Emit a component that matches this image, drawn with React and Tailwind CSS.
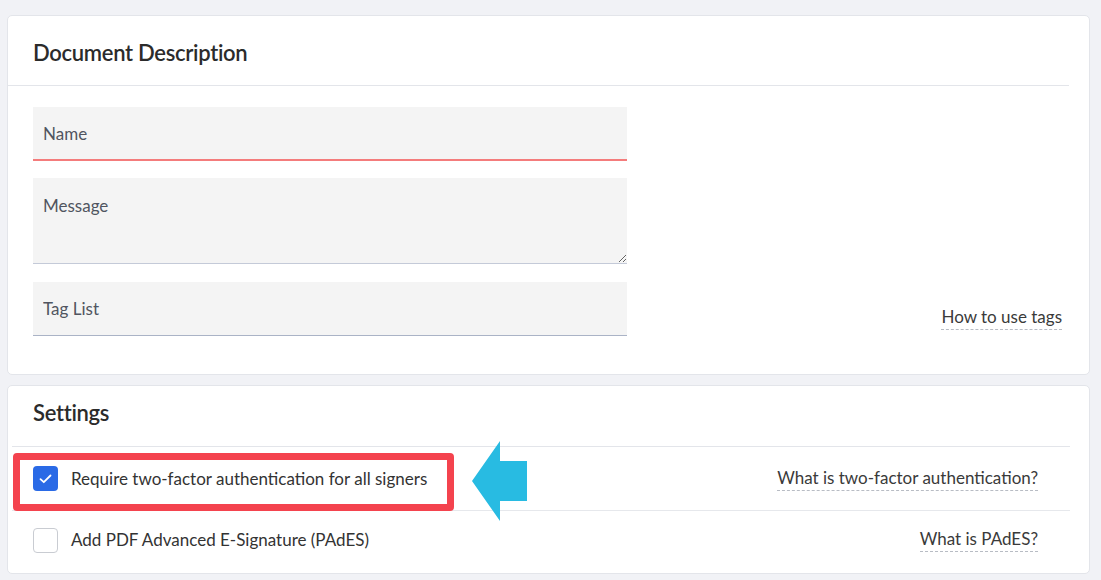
import React from "react";

function HelpLink({ children }) {
  return (
    <span className="text-[17px] leading-[22px] text-[#3a3a3a] border-b border-dashed border-[#b8bcc4] pb-[1px] whitespace-nowrap">
      {children}
    </span>
  );
}

export default function App() {
  return (
    <div
      className="w-[1101px] h-[580px] bg-[#f1f2f6] overflow-hidden"
      style={{ fontFamily: "Lato, 'Noto Sans', sans-serif" }}
    >
      <div className="pt-[15px] pl-[7px] pr-[11px] flex flex-col gap-[10px]">
        {/* Card 1 */}
        <div className="bg-white border border-[#e3e5ea] rounded-[5px] h-[360px] flex flex-col">
          <div className="h-[70px] flex items-center px-[25px] border-b border-[#e3e5ea] mr-[20px]">
            <h2 className="text-[22px] font-semibold text-[#2b2b2b] tracking-[-0.3px] pt-[4px]">
              Document Description
            </h2>
          </div>
          <div className="flex pl-[25px] pr-[27px] pt-[21px]">
            <div className="w-[594px] flex flex-col gap-[18px]">
              <input
                className="h-[54px] w-full bg-[#f4f4f4] border-b-2 border-[#f47c7c] px-[10px] text-[17px] text-[#333] placeholder:text-[#505560] outline-none"
                placeholder="Name"
              />
              <textarea
                className="h-[86px] w-full bg-[#f4f4f4] border-b border-[#c4cad8] px-[10px] pt-[17px] text-[17px] leading-[22px] text-[#333] placeholder:text-[#505560] outline-none resize-y block -mt-[1px]"
                placeholder="Message"
              />
              <input
                className="h-[54px] w-full bg-[#f4f4f4] border-b border-[#aab3c6] px-[10px] text-[17px] text-[#333] placeholder:text-[#505560] outline-none"
                placeholder="Tag List"
              />
            </div>
            <div className="flex-1 flex justify-end items-end pb-[6px]">
              <HelpLink>How to use tags</HelpLink>
            </div>
          </div>
        </div>

        {/* Card 2 */}
        <div className="bg-white border border-[#e3e5ea] rounded-[5px] h-[189px] flex flex-col">
          <div className="h-[60px] flex items-center px-[25px] pb-[8px]">
            <h2 className="text-[22px] font-semibold text-[#2b2b2b] tracking-[-0.3px]">
              Settings
            </h2>
          </div>
          <div className="ml-[4px] mr-[19px] border-t border-[#e3e5ea]">
            <div className="relative h-[64px] flex items-center pl-[21px] pr-[32px] border-b border-[#e6e8ec]">
              <div className="absolute left-[1px] top-[6px] w-[441px] h-[58px] border-[7px] border-[#f4434e] rounded-[4px]" />
              <div className="w-[25px] h-[25px] rounded-[4px] bg-[#2a6ae6] flex items-center justify-center shrink-0">
                <svg width="13" height="10" viewBox="0 0 13 10" fill="none">
                  <path d="M1.5 5.2 L4.8 8.2 L11.5 1.5" stroke="white" strokeWidth="1.8" strokeLinecap="round" strokeLinejoin="round" />
                </svg>
              </div>
              <span className="ml-[13px] text-[17px] text-[#333]">
                Require two-factor authentication for all signers
              </span>
              <div className="flex-1 flex justify-end">
                <HelpLink>What is two-factor authentication?</HelpLink>
              </div>
            </div>
            <div className="h-[60px] flex items-center pl-[21px] pr-[32px] pb-[2px]">
              <div className="w-[25px] h-[25px] rounded-[4px] border border-[#c9ccd2] bg-white shrink-0" />
              <span className="ml-[13px] text-[17px] text-[#333]">
                Add PDF Advanced E-Signature (PAdES)
              </span>
              <div className="flex-1 flex justify-end">
                <HelpLink>What is PAdES?</HelpLink>
              </div>
            </div>
          </div>
        </div>
      </div>

      {/* Arrow overlay */}
      <svg
        className="absolute left-[471px] top-[441px]"
        width="58"
        height="81"
        viewBox="0 0 58 81"
      >
        <polygon points="1,40 29,0 29,20 56,20 56,60 29,60 29,80" fill="#28bbe2" />
      </svg>
    </div>
  );
}
